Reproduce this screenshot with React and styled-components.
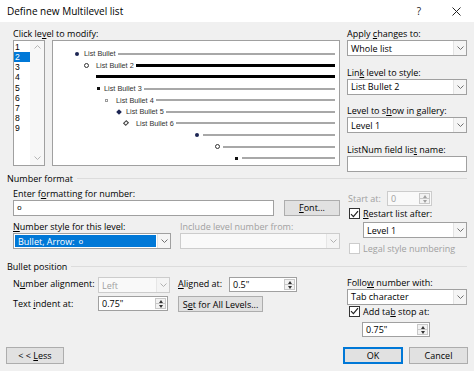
import styled, { createGlobalStyle } from "styled-components";

const GlobalStyle = createGlobalStyle`
  html, body {
    margin: 0;
    padding: 0;
  }
  body {
    background: #f0f0f0;
    font-family: "Open Sans", "Noto Sans", sans-serif;
  }
`;

const Dialog = styled.div`
  width: 474px;
  height: 371px;
  display: flex;
  flex-direction: column;
  background: #f0f0f0;
  color: #000;
  font-size: 9px;
  line-height: 13px;
  overflow: hidden;
  box-sizing: border-box;
  * {
    box-sizing: border-box;
  }
  u {
    text-underline-offset: 1px;
  }
`;

const TitleBar = styled.header`
  height: 22px;
  flex-shrink: 0;
  display: flex;
  align-items: center;
  padding: 0 4px 0 7px;
  background: #fff;
`;

const Title = styled.div`
  flex: 1;
  font-size: 10px;
`;

const CaptionButton = styled.span`
  width: 28px;
  height: 22px;
  display: flex;
  align-items: center;
  justify-content: center;
  margin-left: ${(p) => p.$gap || 0}px;
  font-size: 10px;
  color: #222;
`;

const Body = styled.div`
  padding: 5px 7px 0 13px;
`;

const Columns = styled.div`
  display: grid;
  grid-template-columns: 327px 120px;
  column-gap: 7px;
  align-items: start;
`;

const Stack = styled.div`
  display: flex;
  flex-direction: column;
  padding-top: ${(p) => p.$top || 0}px;
`;

const Label = styled.div`
  white-space: nowrap;
  color: ${(p) => (p.$disabled ? "#a0a0a0" : "#000")};
  padding-left: ${(p) => p.$indent || 0}px;
  margin-top: ${(p) => p.$top || 0}px;
  width: ${(p) => (p.$width ? `${p.$width}px` : "auto")};
  flex-shrink: 0;
`;

const Field = styled.div`
  display: flex;
  flex-direction: column;
  margin-bottom: ${(p) => (p.$last ? 0 : 9.5)}px;
`;

/* level picker + preview */
const LevelRow = styled.div`
  display: flex;
  gap: 7px;
  height: 126px;
`;

const LevelList = styled.div`
  width: 32px;
  display: flex;
  border: 1px solid #a0a0a0;
  background: #fff;
`;

const LevelItems = styled.div`
  width: 16px;
  padding-top: 1px;
`;

const LevelItem = styled.div`
  height: 10.125px;
  line-height: 10.125px;
  padding-left: 1px;
  font-family: "Liberation Sans", Arial, sans-serif;
  font-size: 8.6px;
  background: ${(p) => (p.$selected ? "#0078d7" : "transparent")};
  color: ${(p) => (p.$selected ? "#fff" : "#000")};
`;

const ScrollTrack = styled.div`
  width: 14px;
  display: flex;
  flex-direction: column;
  justify-content: space-between;
  align-items: center;
  padding: 4px 0 5px;
  background: #f7f7f7;
`;

const Preview = styled.div`
  flex: 1;
  display: flex;
  flex-direction: column;
  padding: 7px 4px 0 0;
  border: 1px solid #a0a0a0;
  background: #fff;
`;

const PreviewRow = styled.div`
  height: 11.6px;
  display: flex;
  align-items: center;
  padding-left: ${(p) => p.$indent}px;
  font-family: "Liberation Sans", Arial, sans-serif;
  font-size: 7.3px;
  color: #333;
`;

const BulletSlot = styled.span`
  width: ${(p) => p.$width}px;
  flex-shrink: 0;
  display: flex;
  align-items: center;
`;

const bulletShapes = {
  dot: "width:4px;height:4px;border-radius:50%;background:#1c2553;margin-left:0.5px;",
  ring: "width:5px;height:5px;border-radius:50%;border:1px solid #333;",
  square: "width:3px;height:3px;background:#111;margin-left:1px;",
  hollowSquare: "width:3px;height:3px;border:1px solid #9a9a9a;margin-left:1px;",
  diamond: "width:4px;height:4px;background:#1c2553;transform:rotate(45deg);margin-left:0.5px;",
  hollowDiamond: "width:4px;height:4px;border:1px solid #444;transform:rotate(45deg) scaleY(1.2);margin-left:0.5px;",
};

const Bullet = styled.span`
  display: block;
  ${(p) => bulletShapes[p.$shape]}
`;

const PreviewText = styled.span`
  white-space: nowrap;
`;

const PreviewLine = styled.span`
  flex: 1;
  height: ${(p) => (p.$strong ? 3 : 2)}px;
  margin-left: ${(p) => (p.$afterText ? 2 : 0)}px;
  background: ${(p) => (p.$strong ? "#000" : "#a8a8a8")};
`;

/* controls */
const Frame = styled.div`
  height: ${(p) => p.$height || 16}px;
  width: ${(p) => (p.$width ? `${p.$width}px` : "auto")};
  margin-left: ${(p) => p.$indent || 0}px;
  margin-top: ${(p) => p.$top || 0}px;
  display: flex;
  align-items: stretch;
  border: 1px solid ${(p) => (p.$disabled ? "#cccccc" : "#a0a0a0")};
  background: ${(p) => (p.$disabled ? "#f9f9f9" : "#fff")};
  color: ${(p) => (p.$disabled ? "#a0a0a0" : "#000")};
`;

const Value = styled.div`
  flex: 1;
  display: flex;
  align-items: center;
  padding: 0 3px;
  margin: ${(p) => (p.$highlight ? "1px" : "0")};
  white-space: nowrap;
  background: ${(p) => (p.$highlight ? "#0078d7" : "transparent")};
  color: ${(p) => (p.$highlight ? "#fff" : "inherit")};
`;

const Mono = styled.span`
  font-family: "Liberation Mono", monospace;
  font-size: 8px;
  margin-left: ${(p) => p.$gap || 0}px;
`;

const ArrowZone = styled.div`
  width: 13px;
  display: flex;
  align-items: center;
  justify-content: center;
  border-left: 1px solid ${(p) => (p.$disabled ? "#e6e6e6" : "#e3e3e3")};
  background: ${(p) => (p.$disabled ? "#f4f4f4" : "#f5f5f5")};
`;

const SpinZone = styled.div`
  width: 11px;
  margin: 1px 1px 1px 0;
  display: flex;
  flex-direction: column;
  border: 1px solid #c8c8c8;
  background: #f2f2f2;
`;

const SpinHalf = styled.div`
  flex: 1;
  display: flex;
  align-items: center;
  justify-content: center;
  & + & {
    border-top: 1px solid #c8c8c8;
  }
  &::before {
    content: "";
    border-left: 2.5px solid transparent;
    border-right: 2.5px solid transparent;
    ${(p) => (p.$down ? "border-top" : "border-bottom")}: 3px solid ${(p) =>
      p.$disabled ? "#a0a0a0" : "#333"};
  }
`;

const Button = styled.div`
  height: ${(p) => p.$height || 17}px;
  width: ${(p) => p.$width}px;
  display: flex;
  align-items: center;
  justify-content: center;
  background: #e1e1e1;
  border: 1px solid ${(p) => (p.$default ? "#0078d7" : "#adadad")};
  box-shadow: ${(p) => (p.$default ? "inset 0 0 0 1px #0078d7" : "none")};
  white-space: pre;
`;

const CheckRow = styled.div`
  display: flex;
  align-items: center;
  gap: 3px;
  padding-left: 2px;
  margin-top: ${(p) => p.$top || 0}px;
  color: ${(p) => (p.$disabled ? "#a0a0a0" : "#000")};
`;

const Box = styled.span`
  width: 11px;
  height: 11px;
  display: flex;
  align-items: center;
  justify-content: center;
  border: 1px solid ${(p) => (p.$disabled ? "#cccccc" : "#333")};
  background: #fff;
`;

const SectionHeader = styled.div`
  display: flex;
  align-items: center;
  gap: 4px;
  margin: ${(p) => p.$top || 0}px 0 0 -6px;
  &::after {
    content: "";
    flex: 1;
    height: 1px;
    background: #dcdcdc;
  }
`;

const FormatRow = styled.div`
  display: grid;
  grid-template-columns: 1fr 56px;
  column-gap: 10px;
`;

const StyleGrid = styled.div`
  display: grid;
  grid-template-columns: 158px 1fr;
  column-gap: 9px;
  margin-top: 4.5px;
`;

const InlineRow = styled.div`
  display: flex;
  align-items: center;
  margin-top: ${(p) => p.$top || 0}px;
`;

const PositionGrid = styled.div`
  display: grid;
  grid-template-columns: 85px 80px 51px 68px;
  row-gap: 3px;
  margin-top: 4.5px;
  align-items: start;
`;

const WideButton = styled(Button)`
  grid-column: 3 / span 2;
`;

const Footer = styled.footer`
  margin-top: auto;
  display: flex;
  align-items: center;
  gap: 6px;
  padding: 0 6px 7px;
`;

const Spacer = styled.div`
  flex: 1;
`;

const Chevron = ({ up, color = "#707070" }) => (
  <svg width="7" height="4" viewBox="0 0 7 4">
    <path
      d={up ? "M0.5 3.5 L3.5 0.5 L6.5 3.5" : "M0.5 0.5 L3.5 3.5 L6.5 0.5"}
      fill="none"
      stroke={color}
      strokeWidth="1"
    />
  </svg>
);

const Check = () => (
  <svg width="9" height="8" viewBox="0 0 9 8">
    <path d="M1 4.2 L3.4 6.6 L8 1.2" fill="none" stroke="#222" strokeWidth="1.2" />
  </svg>
);

const ComboBox = ({ children, highlight, disabled, ...rest }) => (
  <Frame $disabled={disabled} {...rest}>
    <Value $highlight={highlight}>{children}</Value>
    <ArrowZone $disabled={disabled}>
      <Chevron color={disabled ? "#b0b0b0" : "#707070"} />
    </ArrowZone>
  </Frame>
);

const SpinBox = ({ children, disabled, ...rest }) => (
  <Frame $disabled={disabled} $height={15} {...rest}>
    <Value>{children}</Value>
    <SpinZone>
      <SpinHalf $disabled={disabled} />
      <SpinHalf $down $disabled={disabled} />
    </SpinZone>
  </Frame>
);

const CheckBox = ({ checked, disabled, children, top }) => (
  <CheckRow $disabled={disabled} $top={top}>
    <Box $disabled={disabled}>{checked && <Check />}</Box>
    <span>{children}</span>
  </CheckRow>
);

const previewRows = [
  { indent: 21.5, slot: 9.5, bullet: "dot", text: "List Bullet" },
  { indent: 31, slot: 12, bullet: "ring", text: "List Bullet 2", strong: true },
  { indent: 43, strong: true },
  { indent: 42.5, slot: 8.5, bullet: "square", text: "List Bullet 3" },
  { indent: 50.5, slot: 12.5, bullet: "hollowSquare", text: "List Bullet 4" },
  { indent: 63, slot: 10, bullet: "diamond", text: "List Bullet 5" },
  { indent: 70.5, slot: 12.5, bullet: "hollowDiamond", text: "List Bullet 6" },
  { indent: 141.5, slot: 8.5, bullet: "dot" },
  { indent: 161.5, slot: 8.5, bullet: "ring" },
  { indent: 180.5, slot: 8.5, bullet: "square" },
];

const levels = ["1", "2", "3", "4", "5", "6", "7", "8", "9"];

export default function App() {
  return (
    <Dialog>
      <GlobalStyle />
      <TitleBar>
        <Title>Define new Multilevel list</Title>
        <CaptionButton>?</CaptionButton>
        <CaptionButton $gap={9}>
          <svg width="9" height="9" viewBox="0 0 9 9">
            <path d="M0.5 0.5 L8.5 8.5 M8.5 0.5 L0.5 8.5" stroke="#222" strokeWidth="1" />
          </svg>
        </CaptionButton>
      </TitleBar>

      <Body>
        <Columns>
          <Stack>
            <Label>
              Click le<u>v</u>el to modify:
            </Label>
            <LevelRow>
              <LevelList>
                <LevelItems>
                  {levels.map((l) => (
                    <LevelItem key={l} $selected={l === "2"}>
                      {l}
                    </LevelItem>
                  ))}
                </LevelItems>
                <ScrollTrack>
                  <Chevron up color="#b5b5b5" />
                  <Chevron color="#b5b5b5" />
                </ScrollTrack>
              </LevelList>
              <Preview>
                {previewRows.map((row, i) => (
                  <PreviewRow key={i} $indent={row.indent}>
                    {row.bullet && (
                      <BulletSlot $width={row.slot}>
                        <Bullet $shape={row.bullet} />
                      </BulletSlot>
                    )}
                    {row.text && <PreviewText>{row.text}</PreviewText>}
                    <PreviewLine $strong={row.strong} $afterText={!!row.text} />
                  </PreviewRow>
                ))}
              </Preview>
            </LevelRow>
          </Stack>

          <Stack>
            <Field>
              <Label>
                Apply <u>c</u>hanges to:
              </Label>
              <ComboBox>Whole list</ComboBox>
            </Field>
            <Field>
              <Label>
                Lin<u>k</u> level to style:
              </Label>
              <ComboBox>List Bullet 2</ComboBox>
            </Field>
            <Field>
              <Label>
                Level to s<u>h</u>ow in gallery:
              </Label>
              <ComboBox>Level 1</ComboBox>
            </Field>
            <Field $last>
              <Label>
                ListNum field lis<u>t</u> name:
              </Label>
              <Frame />
            </Field>
          </Stack>
        </Columns>

        <SectionHeader>Number format</SectionHeader>
        <Columns>
          <Stack $top={2}>
            <Label>
              Enter f<u>o</u>rmatting for number:
            </Label>
            <FormatRow>
              <Frame>
                <Value>
                  <Mono>o</Mono>
                </Value>
              </Frame>
              <Button $height={16}>
                <u>F</u>ont...
              </Button>
            </FormatRow>
            <StyleGrid>
              <Label>
                <u>N</u>umber style for this level:
              </Label>
              <Label $disabled>Include level number from:</Label>
              <ComboBox highlight>
                Bullet, Arrow:<Mono $gap={4}>o</Mono>
              </ComboBox>
              <ComboBox disabled />
            </StyleGrid>
          </Stack>

          <Stack $top={6.5}>
            <InlineRow>
              <Label $disabled $indent={1} $width={40}>
                Start at:
              </Label>
              <SpinBox disabled $width={45}>
                0
              </SpinBox>
            </InlineRow>
            <CheckBox checked top={1}>
              <u>R</u>estart list after:
            </CheckBox>
            <ComboBox $indent={16} $top={2}>
              Level 1
            </ComboBox>
            <CheckBox disabled top={3.5}>
              Legal style numbering
            </CheckBox>
          </Stack>
        </Columns>

        <SectionHeader $top={5}>Bullet position</SectionHeader>
        <Columns>
          <PositionGrid>
            <Label>
              N<u>u</u>mber alignment:
            </Label>
            <ComboBox disabled $width={72}>
              Left
            </ComboBox>
            <Label>
              <u>A</u>ligned at:
            </Label>
            <SpinBox>0.5"</SpinBox>
            <Label $top={1}>
              Text <u>i</u>ndent at:
            </Label>
            <SpinBox $width={70}>0.75"</SpinBox>
            <WideButton $width={85} $height={16}>
              S<u>e</u>t for All Levels...
            </WideButton>
          </PositionGrid>

          <Stack $top={3}>
            <Label>
              Follo<u>w</u> number with:
            </Label>
            <ComboBox>Tab character</ComboBox>
            <CheckBox checked>
              Add ta<u>b</u> stop at:
            </CheckBox>
            <SpinBox $indent={15} $width={68} $top={4.5}>
              0.75"
            </SpinBox>
          </Stack>
        </Columns>
      </Body>

      <Footer>
        <Button $width={58}>
          {"< < "}
          <u>L</u>ess
        </Button>
        <Spacer />
        <Button $width={60} $default>
          OK
        </Button>
        <Button $width={59}>Cancel</Button>
      </Footer>
    </Dialog>
  );
}
